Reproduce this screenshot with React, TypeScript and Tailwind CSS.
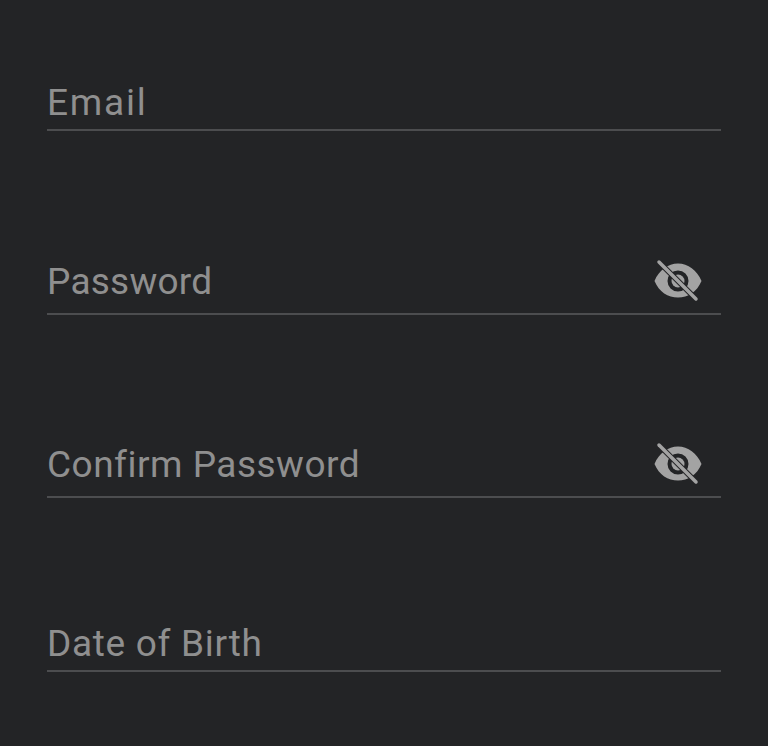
import type { ReactNode } from "react";

function EyeOff() {
  return (
    <svg width="48" height="44" viewBox="0 0 48 44" className="shrink-0">
      <path
        fill="#a3a3a3"
        fillRule="evenodd"
        d="M0.500 22C5 11 14 4.500 24 4.500S43 11 47.500 22C43 33 34 38.500 24 38.500S5 33 0.500 22ZM24 11.500A10.500 10.500 0 1 0 24 32.500A10.500 10.500 0 1 0 24 11.500Z"
      />
      <path fill="#a3a3a3" d="M24 15.500A6.500 6.500 0 1 1 24 28.500A6.500 6.500 0 1 1 24 15.500Z" />
      <path d="M3 1L43 41" stroke="#232426" strokeWidth="5.500" />
      <path d="M5 3L42 40" stroke="#a3a3a3" strokeWidth="3.500" strokeLinecap="round" />
    </svg>
  );
}

function Field({ label, icon, className, tracking }: { label: string; icon?: ReactNode; className: string; tracking: string }) {
  return (
    <div className={`flex items-center justify-between border-b-2 border-[#4c4d4f] h-[60px] pr-[19px] ${className}`}>
      <span className={`text-[37px] leading-none text-[#8f8f8f] font-['Roboto',sans-serif] font-[380] ${tracking}`}>{label}</span>
      {icon}
    </div>
  );
}

export default function App() {
  return (
    <div className="h-[746px] w-[768px] overflow-hidden bg-[#232426] pl-[47px] pr-[47px] pt-[71px]">
      <Field label="Email" tracking="tracking-[1.8px]" className="pt-[4px]" />
      <Field label="Password" icon={<EyeOff />} tracking="tracking-[0.25px]" className="mt-[124px] pb-[6px]" />
      <Field label="Confirm Password" icon={<EyeOff />} tracking="tracking-[0.5px]" className="mt-[123px] pb-[6px]" />
      <Field label="Date of Birth" tracking="tracking-[0.7px]" className="mt-[114px] pt-[4px]" />
    </div>
  );
}
